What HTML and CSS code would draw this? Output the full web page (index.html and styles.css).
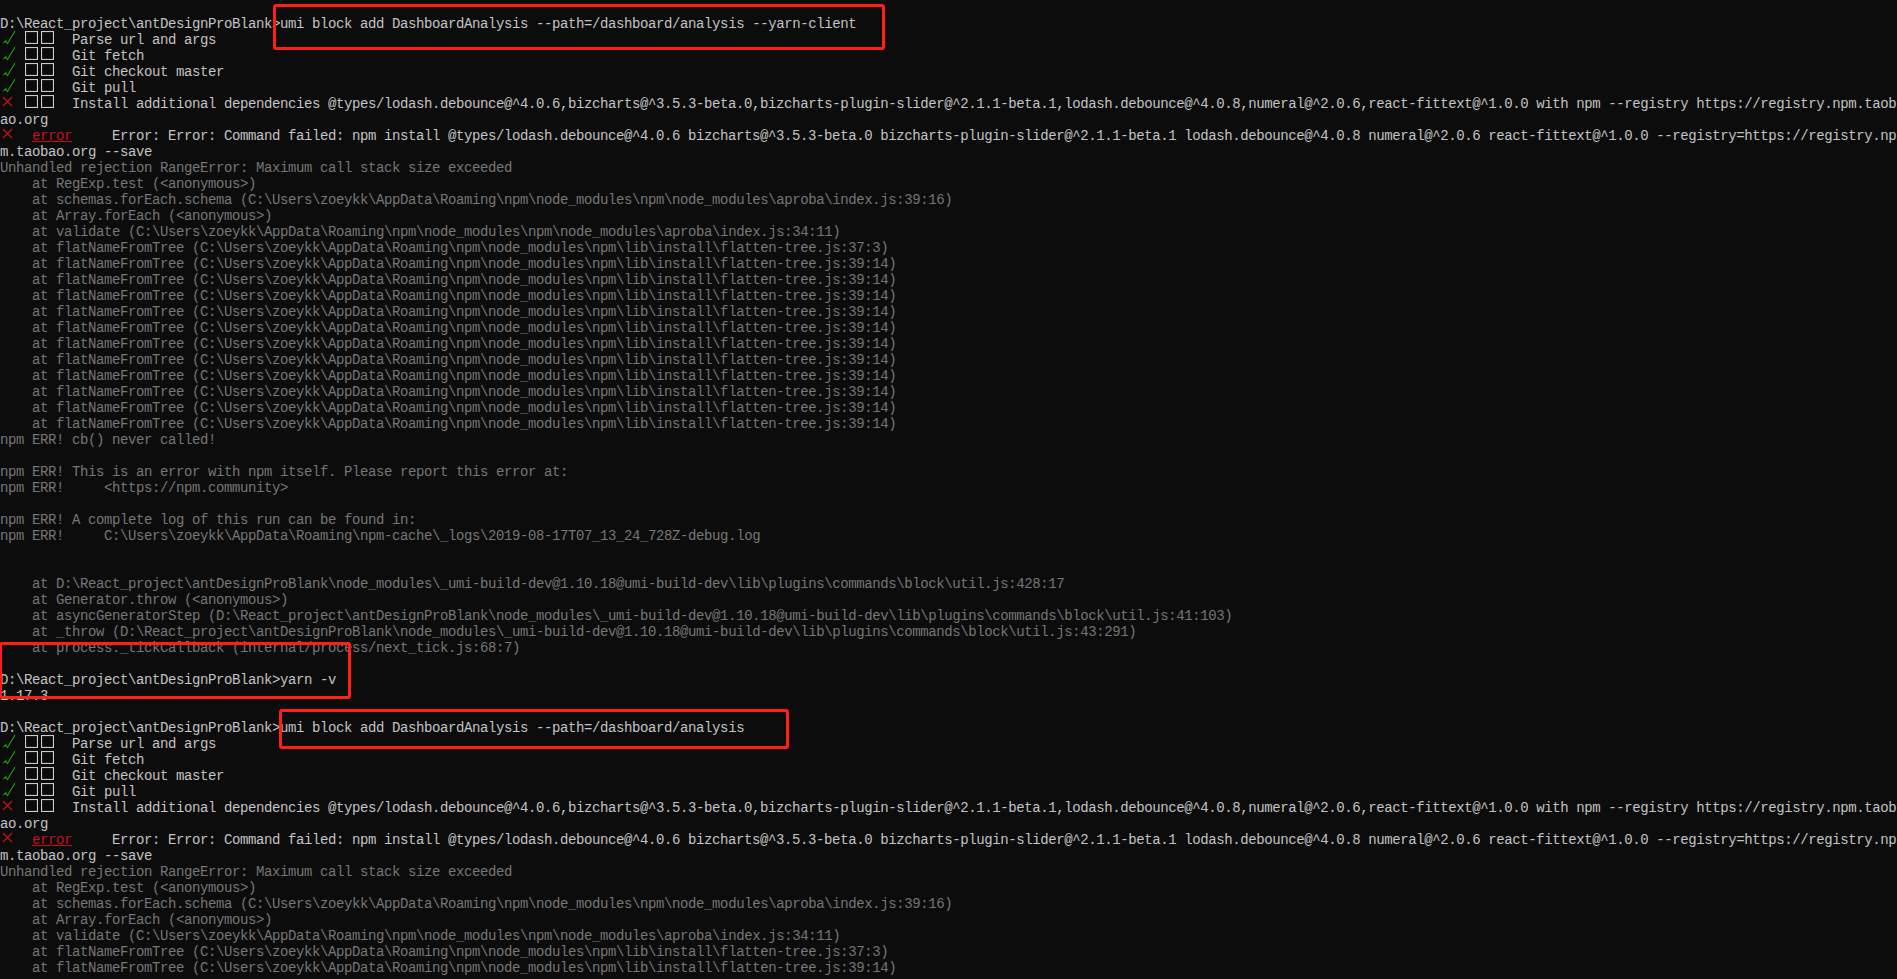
FILE: index.html
```html
<!DOCTYPE html>
<html lang="en">
<head>
<meta charset="utf-8">
<title>Terminal</title>
<link rel="stylesheet" href="styles.css">
</head>
<body>
<main class="terminal">
<div class="line">D:\React_project\antDesignProBlank&gt;umi block add DashboardAnalysis --path=/dashboard/analysis --yarn-client</div>
<div class="line status"><svg class="mark ok" viewBox="0 0 24 16"><polyline points="3.5,12 5.8,10 7.5,12.5 15,0"/></svg><span class="box"></span><span class="box"></span><span class="label">Parse url and args</span></div>
<div class="line status"><svg class="mark ok" viewBox="0 0 24 16"><polyline points="3.5,12 5.8,10 7.5,12.5 15,0"/></svg><span class="box"></span><span class="box"></span><span class="label">Git fetch</span></div>
<div class="line status"><svg class="mark ok" viewBox="0 0 24 16"><polyline points="3.5,12 5.8,10 7.5,12.5 15,0"/></svg><span class="box"></span><span class="box"></span><span class="label">Git checkout master</span></div>
<div class="line status"><svg class="mark ok" viewBox="0 0 24 16"><polyline points="3.5,12 5.8,10 7.5,12.5 15,0"/></svg><span class="box"></span><span class="box"></span><span class="label">Git pull</span></div>
<div class="line status"><svg class="mark bad" viewBox="0 0 24 16"><path d="M3 2 L12 11 M12 2 L3 11"/></svg><span class="box"></span><span class="box"></span><span class="label">Install additional dependencies @types/lodash.debounce@^4.0.6,bizcharts@^3.5.3-beta.0,bizcharts-plugin-slider@^2.1.1-beta.1,lodash.debounce@^4.0.8,numeral@^2.0.6,react-fittext@^1.0.0 with npm --registry https://registry.npm.taob</span></div>
<div class="line">ao.org</div>
<div class="line status"><svg class="mark bad" viewBox="0 0 24 16"><path d="M3 2 L12 11 M12 2 L3 11"/></svg><span class="tag">error</span><span class="message">Error: Error: Command failed: npm install @types/lodash.debounce@^4.0.6 bizcharts@^3.5.3-beta.0 bizcharts-plugin-slider@^2.1.1-beta.1 lodash.debounce@^4.0.8 numeral@^2.0.6 react-fittext@^1.0.0 --registry=https://registry.np</span></div>
<div class="line">m.taobao.org --save</div>
<div class="line muted">Unhandled rejection RangeError: Maximum call stack size exceeded</div>
<div class="line muted">    at RegExp.test (&lt;anonymous&gt;)</div>
<div class="line muted">    at schemas.forEach.schema (C:\Users\zoeykk\AppData\Roaming\npm\node_modules\npm\node_modules\aproba\index.js:39:16)</div>
<div class="line muted">    at Array.forEach (&lt;anonymous&gt;)</div>
<div class="line muted">    at validate (C:\Users\zoeykk\AppData\Roaming\npm\node_modules\npm\node_modules\aproba\index.js:34:11)</div>
<div class="line muted">    at flatNameFromTree (C:\Users\zoeykk\AppData\Roaming\npm\node_modules\npm\lib\install\flatten-tree.js:37:3)</div>
<div class="line muted">    at flatNameFromTree (C:\Users\zoeykk\AppData\Roaming\npm\node_modules\npm\lib\install\flatten-tree.js:39:14)</div>
<div class="line muted">    at flatNameFromTree (C:\Users\zoeykk\AppData\Roaming\npm\node_modules\npm\lib\install\flatten-tree.js:39:14)</div>
<div class="line muted">    at flatNameFromTree (C:\Users\zoeykk\AppData\Roaming\npm\node_modules\npm\lib\install\flatten-tree.js:39:14)</div>
<div class="line muted">    at flatNameFromTree (C:\Users\zoeykk\AppData\Roaming\npm\node_modules\npm\lib\install\flatten-tree.js:39:14)</div>
<div class="line muted">    at flatNameFromTree (C:\Users\zoeykk\AppData\Roaming\npm\node_modules\npm\lib\install\flatten-tree.js:39:14)</div>
<div class="line muted">    at flatNameFromTree (C:\Users\zoeykk\AppData\Roaming\npm\node_modules\npm\lib\install\flatten-tree.js:39:14)</div>
<div class="line muted">    at flatNameFromTree (C:\Users\zoeykk\AppData\Roaming\npm\node_modules\npm\lib\install\flatten-tree.js:39:14)</div>
<div class="line muted">    at flatNameFromTree (C:\Users\zoeykk\AppData\Roaming\npm\node_modules\npm\lib\install\flatten-tree.js:39:14)</div>
<div class="line muted">    at flatNameFromTree (C:\Users\zoeykk\AppData\Roaming\npm\node_modules\npm\lib\install\flatten-tree.js:39:14)</div>
<div class="line muted">    at flatNameFromTree (C:\Users\zoeykk\AppData\Roaming\npm\node_modules\npm\lib\install\flatten-tree.js:39:14)</div>
<div class="line muted">    at flatNameFromTree (C:\Users\zoeykk\AppData\Roaming\npm\node_modules\npm\lib\install\flatten-tree.js:39:14)</div>
<div class="line muted">npm ERR! cb() never called!</div>
<div class="line muted"></div>
<div class="line muted">npm ERR! This is an error with npm itself. Please report this error at:</div>
<div class="line muted">npm ERR!     &lt;https://npm.community&gt;</div>
<div class="line muted"></div>
<div class="line muted">npm ERR! A complete log of this run can be found in:</div>
<div class="line muted">npm ERR!     C:\Users\zoeykk\AppData\Roaming\npm-cache\_logs\2019-08-17T07_13_24_728Z-debug.log</div>
<div class="line muted"></div>
<div class="line muted"></div>
<div class="line muted">    at D:\React_project\antDesignProBlank\node_modules\_umi-build-dev@1.10.18@umi-build-dev\lib\plugins\commands\block\util.js:428:17</div>
<div class="line muted">    at Generator.throw (&lt;anonymous&gt;)</div>
<div class="line muted">    at asyncGeneratorStep (D:\React_project\antDesignProBlank\node_modules\_umi-build-dev@1.10.18@umi-build-dev\lib\plugins\commands\block\util.js:41:103)</div>
<div class="line muted">    at _throw (D:\React_project\antDesignProBlank\node_modules\_umi-build-dev@1.10.18@umi-build-dev\lib\plugins\commands\block\util.js:43:291)</div>
<div class="line muted">    at process._tickCallback (internal/process/next_tick.js:68:7)</div>
<div class="line"></div>
<div class="line">D:\React_project\antDesignProBlank&gt;yarn -v</div>
<div class="line">1.17.3</div>
<div class="line"></div>
<div class="line">D:\React_project\antDesignProBlank&gt;umi block add DashboardAnalysis --path=/dashboard/analysis</div>
<div class="line status"><svg class="mark ok" viewBox="0 0 24 16"><polyline points="3.5,12 5.8,10 7.5,12.5 15,0"/></svg><span class="box"></span><span class="box"></span><span class="label">Parse url and args</span></div>
<div class="line status"><svg class="mark ok" viewBox="0 0 24 16"><polyline points="3.5,12 5.8,10 7.5,12.5 15,0"/></svg><span class="box"></span><span class="box"></span><span class="label">Git fetch</span></div>
<div class="line status"><svg class="mark ok" viewBox="0 0 24 16"><polyline points="3.5,12 5.8,10 7.5,12.5 15,0"/></svg><span class="box"></span><span class="box"></span><span class="label">Git checkout master</span></div>
<div class="line status"><svg class="mark ok" viewBox="0 0 24 16"><polyline points="3.5,12 5.8,10 7.5,12.5 15,0"/></svg><span class="box"></span><span class="box"></span><span class="label">Git pull</span></div>
<div class="line status"><svg class="mark bad" viewBox="0 0 24 16"><path d="M3 2 L12 11 M12 2 L3 11"/></svg><span class="box"></span><span class="box"></span><span class="label">Install additional dependencies @types/lodash.debounce@^4.0.6,bizcharts@^3.5.3-beta.0,bizcharts-plugin-slider@^2.1.1-beta.1,lodash.debounce@^4.0.8,numeral@^2.0.6,react-fittext@^1.0.0 with npm --registry https://registry.npm.taob</span></div>
<div class="line">ao.org</div>
<div class="line status"><svg class="mark bad" viewBox="0 0 24 16"><path d="M3 2 L12 11 M12 2 L3 11"/></svg><span class="tag">error</span><span class="message">Error: Error: Command failed: npm install @types/lodash.debounce@^4.0.6 bizcharts@^3.5.3-beta.0 bizcharts-plugin-slider@^2.1.1-beta.1 lodash.debounce@^4.0.8 numeral@^2.0.6 react-fittext@^1.0.0 --registry=https://registry.np</span></div>
<div class="line">m.taobao.org --save</div>
<div class="line muted">Unhandled rejection RangeError: Maximum call stack size exceeded</div>
<div class="line muted">    at RegExp.test (&lt;anonymous&gt;)</div>
<div class="line muted">    at schemas.forEach.schema (C:\Users\zoeykk\AppData\Roaming\npm\node_modules\npm\node_modules\aproba\index.js:39:16)</div>
<div class="line muted">    at Array.forEach (&lt;anonymous&gt;)</div>
<div class="line muted">    at validate (C:\Users\zoeykk\AppData\Roaming\npm\node_modules\npm\node_modules\aproba\index.js:34:11)</div>
<div class="line muted">    at flatNameFromTree (C:\Users\zoeykk\AppData\Roaming\npm\node_modules\npm\lib\install\flatten-tree.js:37:3)</div>
<div class="line muted">    at flatNameFromTree (C:\Users\zoeykk\AppData\Roaming\npm\node_modules\npm\lib\install\flatten-tree.js:39:14)</div>
<div class="highlight highlight-first"></div>
<div class="highlight highlight-second"></div>
<div class="highlight highlight-third"></div>
</main>
</body>
</html>
```
FILE: styles.css
```css
html, body {
  margin: 0;
  height: 979px;
  overflow: hidden;
  background: #0c0c0c;
}

.terminal {
  position: relative;
  height: 963px;
  padding-top: 16px;
  overflow: hidden;
  background: #0c0c0c;
  color: #c4c4c4;
  font-family: "Liberation Mono", "DejaVu Sans Mono", monospace;
  font-size: 14px;
  letter-spacing: -0.4px;
}

.line {
  height: 16px;
  line-height: 16px;
  white-space: pre;
}

.muted {
  color: #767676;
}

.status {
  display: flex;
  align-items: flex-start;
}

.mark {
  flex: none;
  width: 24px;
  height: 16px;
  margin-top: -1px;
  overflow: visible;
  fill: none;
  stroke-width: 1.2;
}

.ok {
  stroke: #13a10e;
}

.bad {
  stroke: #c50f1f;
}

.box {
  flex: none;
  box-sizing: border-box;
  width: 13px;
  height: 13px;
  margin: -1px 2px 0 1px;
  border: 1px solid #cccccc;
  box-shadow: inset 0 0 1px #cccccc;
}

.label {
  margin-left: 16px;
}

.tag {
  flex: none;
  width: 40px;
  margin-left: 8px;
  color: #c50f1f;
  text-decoration: underline;
}

.message {
  margin-left: 40px;
}

.highlight {
  position: absolute;
  box-sizing: border-box;
  border: 3px solid #ff1f14;
  border-radius: 3px;
}

.highlight-first {
  left: 273px;
  top: 4px;
  width: 612px;
  height: 46px;
}

.highlight-second {
  left: -1px;
  top: 642px;
  width: 352px;
  height: 57px;
}

.highlight-third {
  left: 279px;
  top: 709px;
  width: 510px;
  height: 40px;
}
```
